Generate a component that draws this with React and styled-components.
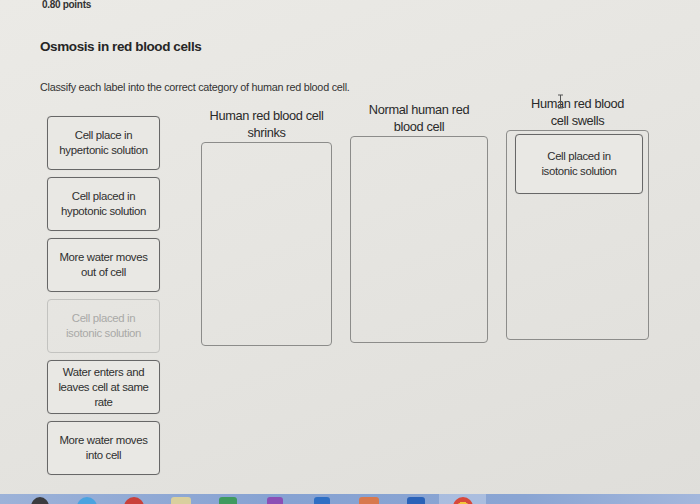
import React from "react";
import styled, { createGlobalStyle } from "styled-components";

const GlobalStyle = createGlobalStyle`
  html, body {
    margin: 0;
    padding: 0;
  }

  body {
    font-family: "Liberation Sans", Arial, sans-serif;
    color: #2b2b2b;
    background: #e6e5e1;
  }
`;

const Screen = styled.div`
  width: 700px;
  height: 504px;
  display: flex;
  flex-direction: column;
  overflow: hidden;
  position: relative;
  background: linear-gradient(160deg, #ebeae6 0%, #e6e5e1 45%, #dfdeda 100%);
`;

const Content = styled.div`
  flex: 1;
  padding-left: 40px;
  display: flex;
  flex-direction: column;
`;

const Points = styled.div`
  margin: 0 0 0 2px;
  height: 10px;
  font-size: 10px;
  line-height: 9px;
  font-weight: bold;
  color: #333;
  letter-spacing: -0.3px;
`;

const Title = styled.h1`
  margin: 28px 0 0;
  font-size: 13.5px;
  line-height: 18px;
  font-weight: bold;
  letter-spacing: -0.4px;
  color: #262626;
`;

const Instruction = styled.p`
  margin: 24px 0 0;
  font-size: 10.8px;
  line-height: 14px;
  letter-spacing: -0.25px;
  color: #333;
`;

const Board = styled.div`
  margin-top: 13px;
  display: flex;
  align-items: flex-start;
`;

const Bank = styled.div`
  width: 113px;
  margin: 9px 0 0 7px;
  display: flex;
  flex-direction: column;
  gap: 7px;
`;

const Card = styled.div`
  box-sizing: border-box;
  height: ${(p) => p.$height || 54}px;
  padding: 0 5px;
  display: flex;
  align-items: center;
  justify-content: center;
  text-align: center;
  font-size: 11.4px;
  line-height: 15px;
  letter-spacing: -0.35px;
  border: 1px solid ${(p) => (p.$ghost ? "#c3c3c0" : "#676767")};
  border-radius: 4px;
  color: ${(p) => (p.$ghost ? "#a9a9a7" : "#2f2f2f")};
  background: ${(p) => (p.$ghost ? "transparent" : "#e9e8e4")};
  box-shadow: ${(p) => (p.$ghost ? "none" : "0 0 1px rgba(0,0,0,0.15)")};
`;

const Targets = styled.div`
  margin-left: 41px;
  display: flex;
  align-items: flex-start;
  gap: 18px;
`;

const Column = styled.div`
  width: ${(p) => p.$width}px;
  margin-top: ${(p) => p.$lift}px;
  display: flex;
  flex-direction: column;
`;

const ColumnTitle = styled.div`
  height: 35px;
  text-align: center;
  font-size: 12.8px;
  line-height: 17px;
  letter-spacing: -0.35px;
  color: #2a2a2a;
`;

const DropBox = styled.div`
  box-sizing: border-box;
  height: ${(p) => p.$height}px;
  padding: 3px 5px 0 8px;
  border: 1px solid #8c8c8a;
  border-radius: 4px;
`;

const Cursor = styled.svg`
  position: absolute;
  left: 557px;
  top: 94px;
`;

const Taskbar = styled.div`
  height: 10px;
  padding-left: 16px;
  display: flex;
  align-items: flex-start;
  overflow: hidden;
  background: linear-gradient(90deg, #9cb2d8 0%, #86a2d2 40%, #8aa5d3 75%, #a3b7dc 100%);
`;

const TaskSlot = styled.div`
  width: 47px;
  height: 10px;
  display: flex;
  justify-content: center;
  padding-top: 3px;
  box-sizing: border-box;
  background: ${(p) => (p.$active ? "rgba(255,255,255,0.28)" : "transparent")};
`;

const TaskIcon = styled.div`
  width: ${(p) => p.$size || 20}px;
  height: 20px;
  border-radius: ${(p) => (p.$round ? "50%" : "3px")};
  background: ${(p) => p.$color};
`;

const bank = [
  { text: ["Cell place in", "hypertonic solution"] },
  { text: ["Cell placed in", "hypotonic solution"] },
  { text: ["More water moves", "out of cell"] },
  { text: ["Cell placed in", "isotonic solution"], ghost: true },
  { text: ["Water enters and", "leaves cell at same", "rate"] },
  { text: ["More water moves", "into cell"] },
];

const columns = [
  { title: ["Human red blood cell", "shrinks"], width: 131, lift: 0, height: 204 },
  { title: ["Normal human red", "blood cell"], width: 138, lift: -6, height: 207 },
  {
    title: ["Human red blood", "cell swells"],
    width: 143,
    lift: -12,
    height: 210,
    cards: [["Cell placed in", "isotonic solution"]],
  },
];

const taskIcons = [
  { color: "#3b3b3f", round: true, size: 18 },
  { color: "#4aa3e0", round: true },
  { color: "#c9413b", round: true },
  { color: "#d9cf9e", size: 20 },
  { color: "#3f9a5f", size: 18 },
  { color: "#8b4fb5", size: 16 },
  { color: "#2f6fc4", size: 16 },
  { color: "#d8794e", size: 20 },
  { color: "#2a62b8", size: 18 },
  { color: "radial-gradient(circle at 50% 60%, #4a8be0 0 25%, #f3c53c 26% 45%, #d8493c 46%)", round: true, active: true },
];

const Lines = ({ lines }) =>
  lines.map((line, i) => (
    <React.Fragment key={i}>
      {i > 0 && <br />}
      {line}
    </React.Fragment>
  ));

export default function App() {
  return (
    <>
      <GlobalStyle />
      <Screen>
        <Content>
          <Points>0.80 points</Points>
          <Title>Osmosis in red blood cells</Title>
          <Instruction>
            Classify each label into the correct category of human red blood cell.
          </Instruction>

          <Board>
            <Bank>
              {bank.map((item, i) => (
                <Card key={i} $ghost={item.ghost}>
                  <div>
                    <Lines lines={item.text} />
                  </div>
                </Card>
              ))}
            </Bank>

            <Targets>
              {columns.map((col, i) => (
                <Column key={i} $width={col.width} $lift={col.lift}>
                  <ColumnTitle>
                    <Lines lines={col.title} />
                  </ColumnTitle>
                  <DropBox $height={col.height}>
                    {(col.cards || []).map((c, j) => (
                      <Card key={j} $height={60}>
                        <div>
                          <Lines lines={c} />
                        </div>
                      </Card>
                    ))}
                  </DropBox>
                </Column>
              ))}
            </Targets>
          </Board>
        </Content>

        {/* text cursor hovering the last heading */}
        <Cursor width="7" height="15" viewBox="0 0 7 15">
          <path d="M1 1h5M3.5 1v13M1 14h5" stroke="#555" strokeWidth="1" fill="none" />
        </Cursor>

        <Taskbar>
          {taskIcons.map((icon, i) => (
            <TaskSlot key={i} $active={icon.active}>
              <TaskIcon $color={icon.color} $round={icon.round} $size={icon.size} />
            </TaskSlot>
          ))}
        </Taskbar>
      </Screen>
    </>
  );
}
